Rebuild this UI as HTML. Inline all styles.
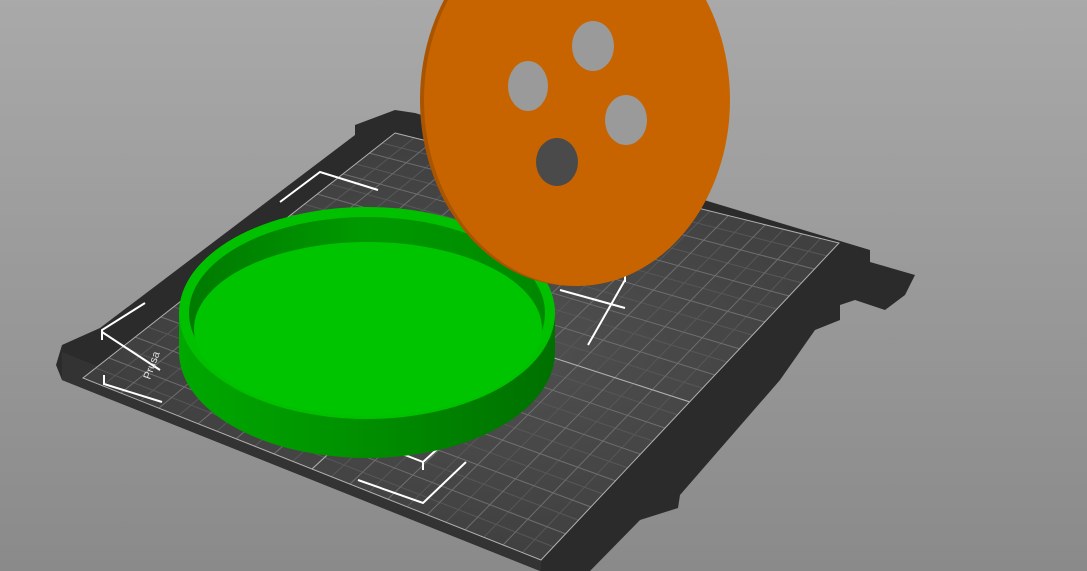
<!DOCTYPE html>
<html><head><meta charset="utf-8"><style>
html,body{margin:0;padding:0;width:1087px;height:571px;overflow:hidden}
body{background:linear-gradient(#a9a9a9,#8a8a8a)}
svg{display:block}
</style></head><body>
<svg width="1087" height="571" viewBox="0 0 1087 571" xmlns="http://www.w3.org/2000/svg">
<defs>
<radialGradient id="sheet" cx="0.55" cy="0.5" r="0.6">
<stop offset="0" stop-color="#505050"/><stop offset="1" stop-color="#3c3c3c"/>
</radialGradient>
<linearGradient id="side" x1="0" x2="1">
<stop offset="0" stop-color="#00a800"/><stop offset="0.4" stop-color="#009400"/><stop offset="1" stop-color="#007000"/>
</linearGradient>
<linearGradient id="inwall" x1="0" x2="1">
<stop offset="0" stop-color="#007a00"/><stop offset="0.5" stop-color="#009a00"/><stop offset="1" stop-color="#008800"/>
</linearGradient>
</defs>
<polygon fill="#2b2b2b" points="355,125 395,110 415,113 870,250 870,262 915,275 905,295 885,310 855,300 840,305 840,320 815,330 780,380 680,495 678,508 640,520 590,571 540,571 62,380 56,365 62,345 100,328 355,135"/>
<polygon fill="#333" points="62,352 541,545 541,571 62,380"/>
<polygon fill="url(#sheet)" points="395,133 839,243 541,560 83,378"/>
<g stroke="#575757" stroke-width="1">
<line x1="382" y1="143" x2="827" y2="256"/><line x1="356" y1="164" x2="802" y2="283"/>
<line x1="330" y1="184" x2="777" y2="309"/><line x1="304" y1="204" x2="752" y2="335"/>
<line x1="278" y1="225" x2="727" y2="362"/><line x1="252" y1="245" x2="702" y2="388"/>
<line x1="226" y1="266" x2="678" y2="415"/><line x1="200" y1="286" x2="653" y2="441"/>
<line x1="174" y1="307" x2="628" y2="468"/><line x1="148" y1="327" x2="603" y2="494"/>
<line x1="122" y1="347" x2="578" y2="520"/><line x1="96" y1="368" x2="554" y2="547"/>
<line x1="414" y1="138" x2="102" y2="386"/><line x1="451" y1="147" x2="140" y2="401"/>
<line x1="488" y1="156" x2="178" y2="416"/><line x1="525" y1="165" x2="217" y2="431"/>
<line x1="562" y1="174" x2="255" y2="446"/><line x1="599" y1="183" x2="293" y2="461"/>
<line x1="636" y1="193" x2="331" y2="477"/><line x1="673" y1="202" x2="369" y2="492"/>
<line x1="710" y1="211" x2="407" y2="507"/><line x1="747" y1="220" x2="446" y2="522"/>
<line x1="784" y1="229" x2="484" y2="537"/><line x1="821" y1="238" x2="522" y2="553"/>
</g>
<g stroke="#6e6e6e" stroke-width="1">
<line x1="369" y1="153" x2="814" y2="269"/><line x1="343" y1="174" x2="789" y2="296"/>
<line x1="317" y1="194" x2="765" y2="322"/><line x1="291" y1="215" x2="740" y2="349"/>
<line x1="265" y1="235" x2="715" y2="375"/><line x1="239" y1="256" x2="690" y2="402"/>
<line x1="213" y1="276" x2="665" y2="428"/><line x1="187" y1="296" x2="640" y2="454"/>
<line x1="161" y1="317" x2="616" y2="481"/><line x1="135" y1="337" x2="591" y2="507"/>
<line x1="109" y1="358" x2="566" y2="534"/>
<line x1="432" y1="142" x2="121" y2="393"/><line x1="469" y1="151" x2="159" y2="408"/>
<line x1="506" y1="161" x2="198" y2="424"/><line x1="543" y1="170" x2="236" y2="439"/>
<line x1="580" y1="179" x2="274" y2="454"/><line x1="617" y1="188" x2="312" y2="469"/>
<line x1="654" y1="197" x2="350" y2="484"/><line x1="691" y1="206" x2="388" y2="499"/>
<line x1="728" y1="216" x2="427" y2="515"/><line x1="765" y1="225" x2="465" y2="530"/>
<line x1="802" y1="234" x2="503" y2="545"/>
</g>
<g stroke="#b0b0b0" stroke-width="1" fill="none">
<polygon points="395,133 839,243 541,560 83,378"/>
<line x1="239" y1="256" x2="690" y2="402"/>
<line x1="617" y1="188" x2="312" y2="469"/>
</g>
<g stroke="#fff" stroke-width="2" fill="none">
<polyline points="280,202 320,172 378,190"/>
<polyline points="102,340 102,330 145,303"/>
<polyline points="102,332 160,370"/>
<polyline points="104,375 104,384 162,402"/>
<polyline points="562,252 625,275 625,282"/>
<polyline points="625,280 588,345"/>
<polyline points="625,308 560,290"/>
<polyline points="356,436 423,462 423,470"/>
<polyline points="423,462 467,422"/>
<polyline points="358,480 423,503 466,462"/>
</g>
<path fill="url(#side)" d="M179,313 L179,352 A188,106 0 0 0 555,352 L555,313 Z"/>
<ellipse cx="367" cy="313" rx="188" ry="106" fill="#00c000"/>
<ellipse cx="367" cy="313" rx="178" ry="96" fill="url(#inwall)"/>
<ellipse cx="368" cy="329" rx="174" ry="87" fill="#00c400"/>
<ellipse cx="573" cy="100" rx="153" ry="186" fill="#a85400"/>
<ellipse cx="577" cy="100" rx="153" ry="186" fill="#c86400"/>
<g fill="#9a9a9a">
<ellipse cx="593" cy="46" rx="21" ry="25"/>
<ellipse cx="528" cy="86" rx="20" ry="25"/>
<ellipse cx="626" cy="120" rx="21" ry="25"/>
<ellipse cx="557" cy="162" rx="21" ry="24" fill="#4a4a4a"/>
</g>
<text x="150" y="380" fill="#ddd" font-family="Liberation Sans, sans-serif" font-size="11" transform="rotate(-70 150 380)">Prusa</text>
</svg>
</body></html>
